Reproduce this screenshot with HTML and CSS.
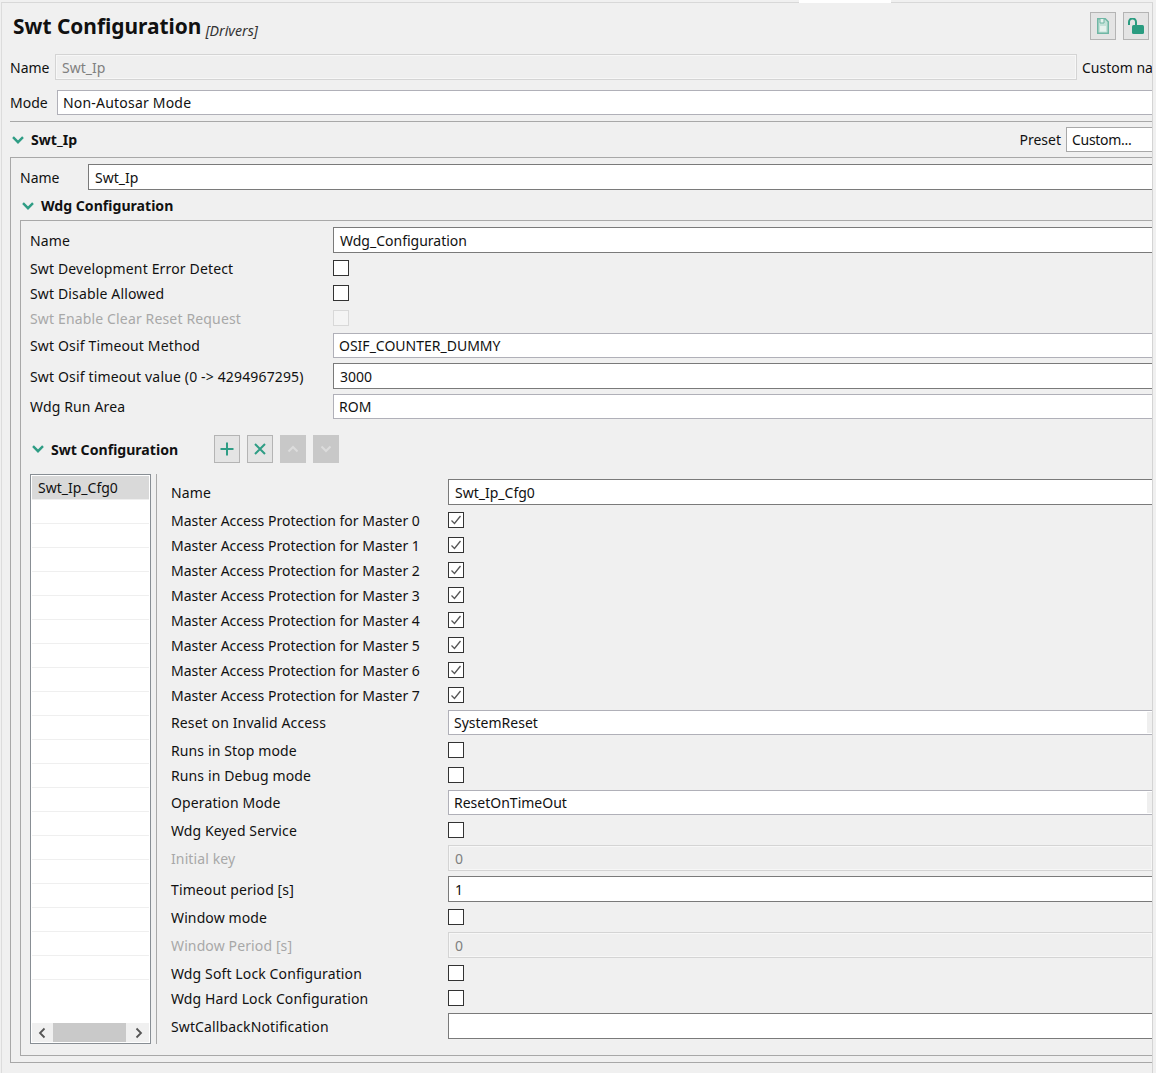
FILE: index.html
```html
<!DOCTYPE html>
<html lang="en">
<head>
<meta charset="utf-8">
<title>Swt Configuration</title>
<link rel="stylesheet" href="styles.css">
</head>
<body>
<div class="view">
  <div class="tab-notch"></div>
  <header class="title-bar">
    <h1 class="title">Swt Configuration</h1>
    <span class="subtitle">[Drivers]</span>
    <div class="title-actions">
      <button class="tool-btn" type="button" aria-label="Save">
        <svg width="12" height="16" viewBox="0 0 12 16"><path d="M.75.75h7.5l3 3v11.5H.75z" fill="#c4e2d9" stroke="#6fb6a4" stroke-width="1.5"/><path d="M3 1v4h4V1" fill="#e6f2ee" stroke="#6fb6a4"/><rect x="3" y="8" width="6" height="5.5" fill="#e6f2ee"/></svg>
      </button>
      <button class="tool-btn" type="button" aria-label="Unlock">
        <svg width="16" height="16" viewBox="0 0 16 16"><path d="M1 7V4a3.5 3.5 0 0 1 7 0v3" fill="none" stroke="#2a9c80" stroke-width="2"/><rect x="4" y="7" width="12" height="9" rx="1.5" fill="#2a9c80"/></svg>
      </button>
    </div>
  </header>
  <div class="row name-row">
    <span class="lbl name-lbl">Name</span>
    <div class="field ro top-name">Swt_Ip</div>
    <span class="lbl custom">Custom name</span>
  </div>
  <div class="row mode-row">
    <span class="lbl mode-lbl">Mode</span>
    <div class="field combo mode-field">Non-Autosar Mode</div>
  </div>
  <div class="sep"></div>
  <div class="section-head top-head">
    <svg class="chev" width="12" height="8" viewBox="0 0 12 8"><path d="M1 1.2 6 6.2l5-5" fill="none" stroke="#2f9d85" stroke-width="2.4"/></svg>
    <span class="sec-title">Swt_Ip</span>
    <span class="preset-lbl">Preset</span>
    <div class="field preset">Custom...</div>
  </div>
  <section class="box outer">
    <div class="row ip-name">
      <span class="lbl ip-lbl">Name</span>
      <div class="field dark grow">Swt_Ip</div>
    </div>
    <div class="section-head wdg-head">
      <svg class="chev" width="12" height="8" viewBox="0 0 12 8"><path d="M1 1.2 6 6.2l5-5" fill="none" stroke="#2f9d85" stroke-width="2.4"/></svg>
      <span class="sec-title">Wdg Configuration</span>
    </div>
    <section class="box inner">
      <div class="form wdg-form">
        <div class="frow h31"><span class="lbl">Name</span><div class="field dark">Wdg_Configuration</div></div>
        <div class="frow h25"><span class="lbl">Swt Development Error Detect</span><span class="check"></span></div>
        <div class="frow h25"><span class="lbl">Swt Disable Allowed</span><span class="check"></span></div>
        <div class="frow h25"><span class="lbl off">Swt Enable Clear Reset Request</span><span class="check disabled"></span></div>
        <div class="frow h30"><span class="lbl">Swt Osif Timeout Method</span><div class="field combo">OSIF_COUNTER_DUMMY</div></div>
        <div class="frow h31"><span class="lbl">Swt Osif timeout value (0 -&gt; 4294967295)</span><div class="field dark">3000</div></div>
        <div class="frow h30"><span class="lbl">Wdg Run Area</span><div class="field combo">ROM</div></div>
      </div>
      <div class="section-head cfg-head">
        <svg class="chev" width="12" height="8" viewBox="0 0 12 8"><path d="M1 1.2 6 6.2l5-5" fill="none" stroke="#2f9d85" stroke-width="2.4"/></svg>
        <span class="sec-title">Swt Configuration</span>
        <div class="cfg-tools">
          <button class="sq" type="button" aria-label="Add"><svg width="16" height="16" viewBox="0 0 16 16"><path d="M8 1.5v13M1.5 8h13" stroke="#2f9d85" stroke-width="2"/></svg></button>
          <button class="sq" type="button" aria-label="Remove"><svg width="14" height="14" viewBox="0 0 14 14"><path d="M2 2l10 10M12 2 2 12" stroke="#2f9d85" stroke-width="2"/></svg></button>
          <button class="sq off" type="button" aria-label="Up"><svg width="12" height="8" viewBox="0 0 12 8"><path d="M1.5 6.5 6 2l4.5 4.5" fill="none" stroke="#dcdcdc" stroke-width="2"/></svg></button>
          <button class="sq off" type="button" aria-label="Down"><svg width="12" height="8" viewBox="0 0 12 8"><path d="M1.5 1.5 6 6l4.5-4.5" fill="none" stroke="#dcdcdc" stroke-width="2"/></svg></button>
        </div>
      </div>
      <div class="cfg-body">
        <div class="listbox">
          <div class="list-rows">
            <div class="li sel">Swt_Ip_Cfg0</div>
            <div class="li"></div><div class="li"></div><div class="li"></div><div class="li"></div>
            <div class="li"></div><div class="li"></div><div class="li"></div><div class="li"></div>
            <div class="li"></div><div class="li"></div><div class="li"></div><div class="li"></div>
            <div class="li"></div><div class="li"></div><div class="li"></div><div class="li"></div>
            <div class="li"></div><div class="li"></div><div class="li"></div><div class="li last"></div>
          </div>
          <div class="hscroll">
            <svg width="10" height="12" viewBox="0 0 10 12"><path d="M7.5 1.5 3 6l4.5 4.5" fill="none" stroke="#555" stroke-width="1.8"/></svg>
            <div class="thumb"></div>
            <svg width="10" height="12" viewBox="0 0 10 12"><path d="M2.5 1.5 7 6l-4.5 4.5" fill="none" stroke="#555" stroke-width="1.8"/></svg>
          </div>
        </div>
        <div class="form cfg-form">
          <div class="frow h31"><span class="lbl">Name</span><div class="field dark">Swt_Ip_Cfg0</div></div>
          <div class="frow h25"><span class="lbl master">Master Access Protection for Master 0</span><span class="check on"></span></div>
          <div class="frow h25"><span class="lbl master">Master Access Protection for Master 1</span><span class="check on"></span></div>
          <div class="frow h25"><span class="lbl master">Master Access Protection for Master 2</span><span class="check on"></span></div>
          <div class="frow h25"><span class="lbl master">Master Access Protection for Master 3</span><span class="check on"></span></div>
          <div class="frow h25"><span class="lbl master">Master Access Protection for Master 4</span><span class="check on"></span></div>
          <div class="frow h25"><span class="lbl master">Master Access Protection for Master 5</span><span class="check on"></span></div>
          <div class="frow h25"><span class="lbl master">Master Access Protection for Master 6</span><span class="check on"></span></div>
          <div class="frow h25"><span class="lbl master">Master Access Protection for Master 7</span><span class="check on"></span></div>
          <div class="frow h30"><span class="lbl">Reset on Invalid Access</span><div class="field combo arrow">SystemReset</div></div>
          <div class="frow h25"><span class="lbl">Runs in Stop mode</span><span class="check"></span></div>
          <div class="frow h25"><span class="lbl">Runs in Debug mode</span><span class="check"></span></div>
          <div class="frow h30"><span class="lbl">Operation Mode</span><div class="field combo arrow">ResetOnTimeOut</div></div>
          <div class="frow h25"><span class="lbl">Wdg Keyed Service</span><span class="check"></span></div>
          <div class="frow h31"><span class="lbl off">Initial key</span><div class="field ro">0</div></div>
          <div class="frow h31"><span class="lbl">Timeout period [s]</span><div class="field dark">1</div></div>
          <div class="frow h25"><span class="lbl">Window mode</span><span class="check"></span></div>
          <div class="frow h31"><span class="lbl off">Window Period [s]</span><div class="field ro">0</div></div>
          <div class="frow h25"><span class="lbl">Wdg Soft Lock Configuration</span><span class="check"></span></div>
          <div class="frow h25"><span class="lbl">Wdg Hard Lock Configuration</span><span class="check"></span></div>
          <div class="frow h31"><span class="lbl">SwtCallbackNotification</span><div class="field dark"></div></div>
        </div>
      </div>
    </section>
  </section>
</div>
</body>
</html>
```
FILE: styles.css
```css
* { box-sizing: border-box; }
html, body { margin: 0; padding: 0; height: 100%; overflow: hidden; }
body { background: #f0f0f0; font: 14px/20px "Noto Sans", "Open Sans", sans-serif; color: #111; }
.view { position: relative; width: 1152px; height: 1071px; margin: 2px 3px 0 1px; border-top: 1px solid #d8d8d8; border-left: 1px solid #dcdcdc; border-right: 1px solid #d4d4d4; }
.tab-notch { position: absolute; top: -3px; left: 797px; width: 92px; height: 3px; background: #fff; }
.title-bar { display: flex; align-items: flex-start; height: 50px; padding: 8px 0 0 11px; }
.title { margin: 0; font-size: 20.9px; line-height: 30px; font-weight: 700; color: #111; }
.subtitle { margin: 10px 0 0 4px; font-style: italic; font-size: 14.2px; line-height: 20px; color: #333; }
.title-actions { margin: 1px 3px 0 auto; display: flex; gap: 7px; }
.tool-btn { width: 26px; height: 28px; padding: 0; border: 1px solid #b4b4b4; background: #e4e4e4; display: flex; align-items: center; justify-content: center; }
.row { display: flex; align-items: center; }
.lbl { white-space: nowrap; }
.lbl.off { color: #a8a8a8; }
.name-lbl { width: 45px; flex: none; margin-top: 2px; }
.mode-lbl { width: 47px; flex: none; }
.name-row { height: 27px; padding-left: 8px; overflow: hidden; }
.field { height: 26px; line-height: 24px; padding-left: 6px; background: #fff; border: 1px solid #b0b0b8; border-width: 1px 0 1px 1px; white-space: nowrap; min-width: 0; flex: 1; }
.frow .field, .frow .check { margin-bottom: 1px; }
.frow .field.dark, .frow .field.ro { line-height: 26px; }
.field.combo { height: 25px; line-height: 23px; padding-left: 5px; }
.field.arrow { background: linear-gradient(#efefef, #efefef) right 0 top 1px / 5px calc(100% - 2px) no-repeat #fff; }
.field.ro { background: #efefef; color: #808080; border: 1px solid #d4d4d4; border-right-width: 0; box-shadow: inset 0 0 0 1px #f7f7f7; }
.field.dark { border-color: #7a7a7a; }
.top-name.ro { flex: none; width: 1022px; border: 1px solid #d4d4d4; line-height: 25px; }
.custom { margin: 2px 0 0 5px; width: 70px; overflow: hidden; flex: none; }
.mode-row { height: 25px; margin-top: 10px; padding-left: 8px; }
.mode-field { letter-spacing: .2px; }
.sep { height: 1px; background: #a8a8a8; margin: 6px 0 0 8px; }
.section-head { display: flex; align-items: center; }
.chev { flex: none; margin-right: 7px; }
.sec-title { font-weight: 700; font-size: 14.1px; color: #111; white-space: nowrap; }
.top-head { height: 35px; padding-left: 10px; }
.preset-lbl { margin-left: auto; }
.preset { flex: none; width: 86px; margin-left: 5px; height: 25px; padding-left: 5px; border-color: #a8a8a8; line-height: 23px; letter-spacing: -.3px; }
.box { border: 1px solid #a8a8a8; border-right-width: 0; }
.outer { margin-left: 8px; height: 906px; padding: 6px 0 0 9px; }
.ip-lbl { width: 68px; flex: none; margin-top: 1px; }
.ip-name { height: 26px; }
.ip-name .field { line-height: 25px; }
.wdg-head { height: 30px; padding: 2px 0 0 2px; }
.inner { height: 836px; padding: 4px 0 0 9px; }
.form { display: flex; flex-direction: column; }
.frow { display: flex; align-items: center; flex: none; }
.h31 { height: 31px; }
.h30 { height: 30px; }
.h25 { height: 25px; }
.wdg-form .lbl { width: 303px; flex: none; letter-spacing: .15px; }
.cfg-form .lbl { width: 277px; flex: none; letter-spacing: .12px; }
.cfg-form .lbl.master { letter-spacing: 0; }
.check { width: 16px; height: 16px; background: #fff; border: 1px solid #333; flex: none; }
.check.disabled { border-color: #d8d8d8; background: #f4f4f4; }
.check.on { background: #fff url("data:image/svg+xml,%3Csvg xmlns='http://www.w3.org/2000/svg' width='14' height='14' viewBox='0 0 14 14'%3E%3Cpath d='M2.5 7.5 5.5 10.5 11.5 3' fill='none' stroke='%23555' stroke-width='1.3'/%3E%3C/svg%3E") center no-repeat; }
.cfg-head { height: 32px; margin-top: 11px; padding-left: 2px; }
.cfg-head .sec-title { margin-top: 2px; }
.cfg-tools { display: flex; gap: 7px; margin-left: 36px; }
.sq { width: 26px; height: 28px; padding: 0; border: 1px solid #b4b4b4; background: #e4e4e4; display: flex; align-items: center; justify-content: center; }
.sq.off { background: #c8c8c8; border-color: #c8c8c8; }
.cfg-body { display: flex; margin-top: 9px; }
.listbox { flex: none; width: 121px; height: 570px; border: 1px solid #888e94; padding: 1px; background: #fff; display: flex; flex-direction: column; }
.list-rows { flex: 1; overflow: hidden; }
.li { height: 24px; border-bottom: 1px solid #efefef; }
.li.sel { background: #d9d9d9; padding-left: 6px; line-height: 23px; }
.hscroll { flex: none; height: 19px; background: #f0f0f0; display: flex; align-items: center; padding: 0 5px; justify-content: space-between; }
.thumb { width: 73px; height: 19px; margin-right: 2px; background: #c9c9c9; }
.cfg-form { flex: 1; min-width: 0; margin-left: 5px; border-left: 1px solid #a8a8a8; padding: 3px 0 0 14px; height: 570px; }
```
